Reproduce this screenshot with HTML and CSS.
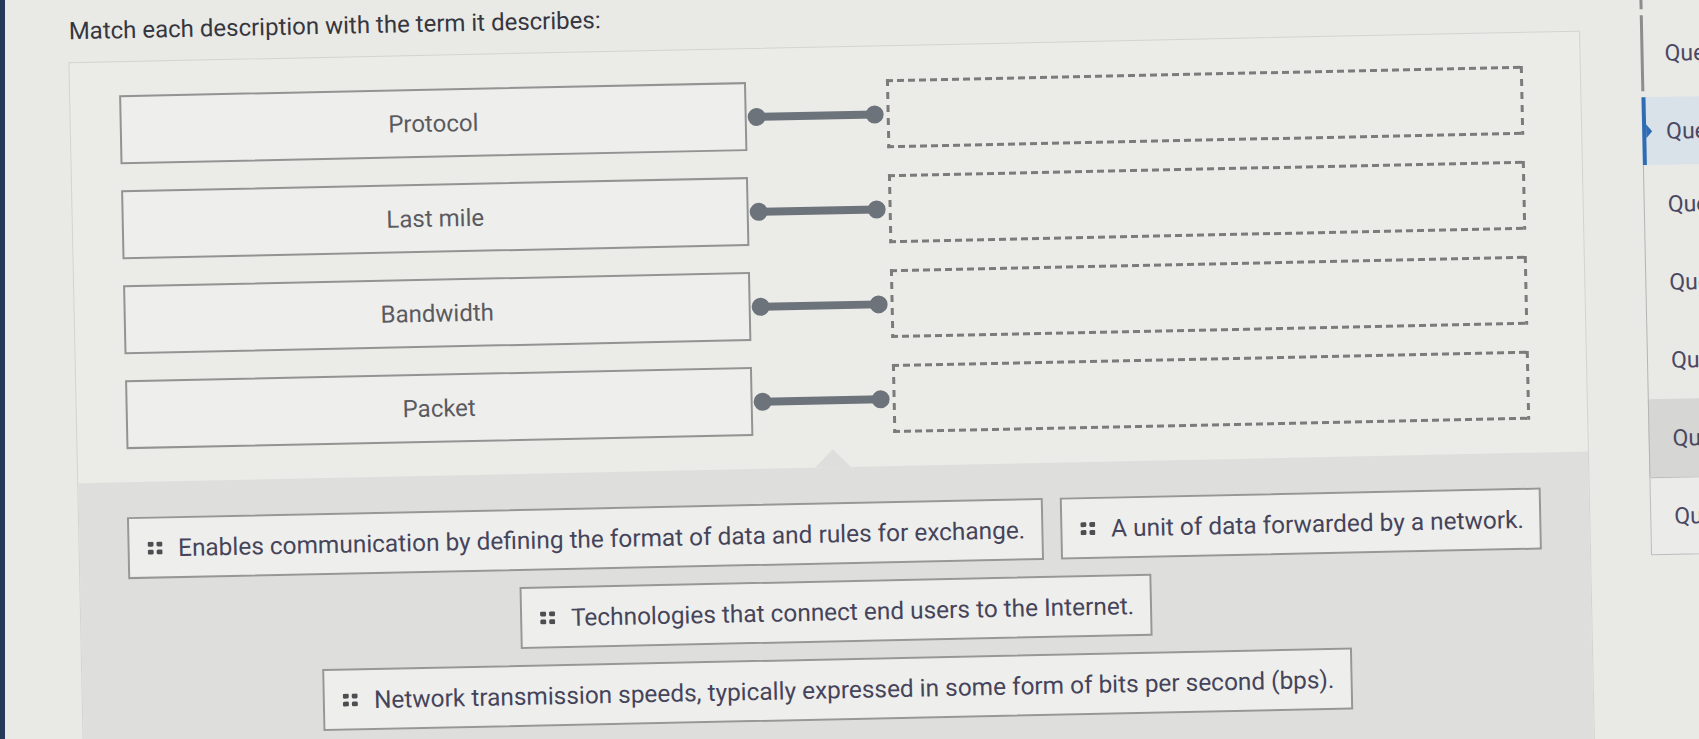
FILE: index.html
```html
<!DOCTYPE html>
<html lang="en">
<head>
    <meta charset="UTF-8">
    <meta name="viewport" content="width=device-width, initial-scale=1.0">
    <title>Matching question</title>
    <link rel="stylesheet" href="styles.css">
</head>
<body>
    <div class="bezel"></div>

    <div class="screen">
        <main class="quiz">
            <h1 class="prompt">Match each description with the term it describes:</h1>

            <div class="panel">
                <div class="pairs">
                    <div class="pair">
                        <div class="term">Protocol</div>
                        <svg class="link" viewBox="0 0 140 20"><line x1="10" y1="10" x2="128" y2="10"/><circle cx="10" cy="10" r="9"/><circle cx="128" cy="10" r="9"/></svg>
                        <div class="drop"></div>
                    </div>
                    <div class="pair">
                        <div class="term">Last mile</div>
                        <svg class="link" viewBox="0 0 140 20"><line x1="10" y1="10" x2="128" y2="10"/><circle cx="10" cy="10" r="9"/><circle cx="128" cy="10" r="9"/></svg>
                        <div class="drop"></div>
                    </div>
                    <div class="pair">
                        <div class="term">Bandwidth</div>
                        <svg class="link" viewBox="0 0 140 20"><line x1="10" y1="10" x2="128" y2="10"/><circle cx="10" cy="10" r="9"/><circle cx="128" cy="10" r="9"/></svg>
                        <div class="drop"></div>
                    </div>
                    <div class="pair">
                        <div class="term">Packet</div>
                        <svg class="link" viewBox="0 0 140 20"><line x1="10" y1="10" x2="128" y2="10"/><circle cx="10" cy="10" r="9"/><circle cx="128" cy="10" r="9"/></svg>
                        <div class="drop"></div>
                    </div>
                </div>

                <div class="bank">
                    <div class="card">
                        <svg class="grip" viewBox="0 0 15 13"><rect x="0" y="0" width="6" height="5" rx="1.5"/><rect x="9" y="0" width="6" height="5" rx="1.5"/><rect x="0" y="8" width="6" height="5" rx="1.5"/><rect x="9" y="8" width="6" height="5" rx="1.5"/></svg>
                        <span>Enables communication by defining the format of data and rules for exchange.</span>
                    </div>
                    <div class="card">
                        <svg class="grip" viewBox="0 0 15 13"><rect x="0" y="0" width="6" height="5" rx="1.5"/><rect x="9" y="0" width="6" height="5" rx="1.5"/><rect x="0" y="8" width="6" height="5" rx="1.5"/><rect x="9" y="8" width="6" height="5" rx="1.5"/></svg>
                        <span>A unit of data forwarded by a network.</span>
                    </div>
                    <div class="card">
                        <svg class="grip" viewBox="0 0 15 13"><rect x="0" y="0" width="6" height="5" rx="1.5"/><rect x="9" y="0" width="6" height="5" rx="1.5"/><rect x="0" y="8" width="6" height="5" rx="1.5"/><rect x="9" y="8" width="6" height="5" rx="1.5"/></svg>
                        <span>Technologies that connect end users to the Internet.</span>
                    </div>
                    <div class="card">
                        <svg class="grip" viewBox="0 0 15 13"><rect x="0" y="0" width="6" height="5" rx="1.5"/><rect x="9" y="0" width="6" height="5" rx="1.5"/><rect x="0" y="8" width="6" height="5" rx="1.5"/><rect x="9" y="8" width="6" height="5" rx="1.5"/></svg>
                        <span>Network transmission speeds, typically expressed in some form of bits per second (bps).</span>
                    </div>
                </div>
            </div>
        </main>

        <nav class="sidebar">
            <ul class="q-list">
                <li class="q-item past">Question 1</li>
                <li class="q-item past">Question 2</li>
                <li class="q-item current">Question 3</li>
                <li class="q-item">Question 4</li>
                <li class="q-item">Question 5</li>
                <li class="q-item">Question 6</li>
                <li class="q-item seen">Question 7</li>
                <li class="q-item last">Question 8</li>
            </ul>
        </nav>
    </div>
</body>
</html>
```

FILE: styles.css
```css
* {
    margin: 0;
    padding: 0;
    box-sizing: border-box;
}

html,
body {
    height: 100%;
    overflow: hidden;
}

body {
    background-color: #e9e9e6;
    font-family: Roboto, "Noto Sans", Arial, sans-serif;
    color: #3f3f46;
}

.bezel {
    position: absolute;
    top: 0;
    bottom: 0;
    left: 0;
    width: 5px;
    background: #27395a;
    z-index: 2;
}

/* the photo is taken slightly tilted */
.screen {
    display: flex;
    align-items: flex-start;
    width: 1699px;
    height: 739px;
    padding-left: 75px;
    transform: rotate(-1.2deg);
    transform-origin: 50% 50%;
}

.quiz {
    width: 1512px;
    flex-shrink: 0;
}

.prompt {
    font-size: 24px;
    font-weight: 400;
    line-height: 28px;
    margin-top: 1px;
    margin-bottom: 17px;
    padding-left: 1px;
    color: #36363e;
}

.panel {
    border: 1px solid #d3d3d0;
    background-color: #ebebe8;
}

.pairs {
    display: flex;
    flex-direction: column;
    gap: 26px;
    padding: 33px 57px 33px 49px;
}

.pair {
    display: flex;
    align-items: center;
    height: 69px;
}

.term {
    width: 627px;
    height: 69px;
    flex-shrink: 0;
    display: flex;
    align-items: center;
    justify-content: center;
    border: 2px solid #939393;
    background-color: #eeeeec;
    font-size: 24px;
    color: #5a5a5f;
}

.link {
    width: 140px;
    height: 20px;
    flex-shrink: 0;
}

.link line {
    stroke: #6d737a;
    stroke-width: 8;
}

.link circle {
    fill: #6d737a;
}

/* short, tight dashes like the original drop zones */
.drop {
    width: 637px;
    height: 69px;
    flex-shrink: 0;
    background:
        repeating-linear-gradient(90deg, #7b7b7b 0 7px, transparent 7px 11px) top left / 100% 3px no-repeat,
        repeating-linear-gradient(90deg, #7b7b7b 0 7px, transparent 7px 11px) bottom left / 100% 3px no-repeat,
        repeating-linear-gradient(180deg, #7b7b7b 0 7px, transparent 7px 13px) top left / 3px 100% no-repeat,
        repeating-linear-gradient(180deg, #7b7b7b 0 7px, transparent 7px 13px) top right / 3px 100% no-repeat;
}

.bank {
    position: relative;
    display: flex;
    flex-wrap: wrap;
    justify-content: center;
    gap: 16px 17px;
    padding: 35px 10px 60px;
    background-color: #dededc;
}

.bank::before {
    content: "";
    position: absolute;
    top: -18px;
    left: 50%;
    margin-left: -18px;
    border-left: 18px solid transparent;
    border-right: 18px solid transparent;
    border-bottom: 18px solid #dededc;
}

.card {
    display: flex;
    align-items: center;
    gap: 16px;
    height: 62px;
    padding: 0 16px 0 18px;
    border: 2px solid #979797;
    background-color: #eeeeec;
    font-size: 24.4px;
    color: #45445a;
    white-space: nowrap;
}

.grip {
    width: 15px;
    height: 13px;
    flex-shrink: 0;
    fill: #4d4d52;
}

.sidebar {
    width: 220px;
    flex-shrink: 0;
    margin-left: 60px;
    margin-top: -50px;
}

.q-list {
    list-style: none;
}

.q-item {
    position: relative;
    display: flex;
    align-items: center;
    height: 78px;
    padding-left: 23px;
    border-left: 1px solid #b4b4b4;
    background-color: #e9e9e6;
    font-size: 23px;
    color: #4a4862;
    white-space: nowrap;
}

.q-item.past {
    height: 76px;
    margin-bottom: 6px;
    padding-left: 21px;
    border-left: 3px solid #8d8d8d;
}

.q-item.current {
    height: 68px;
    padding-left: 20px;
    border-left: 4px solid #2f6cb3;
    background-color: #dae2e9;
}

.q-item.current::before {
    content: "";
    position: absolute;
    top: 50%;
    left: 0;
    margin-top: -7px;
    border-top: 7px solid transparent;
    border-bottom: 7px solid transparent;
    border-left: 6px solid #2f6cb3;
}

.q-item.seen {
    background-color: #d6d6d5;
}

.q-item.last {
    border: 1px solid #bcbcbc;
    background-color: #ebebea;
}
```
